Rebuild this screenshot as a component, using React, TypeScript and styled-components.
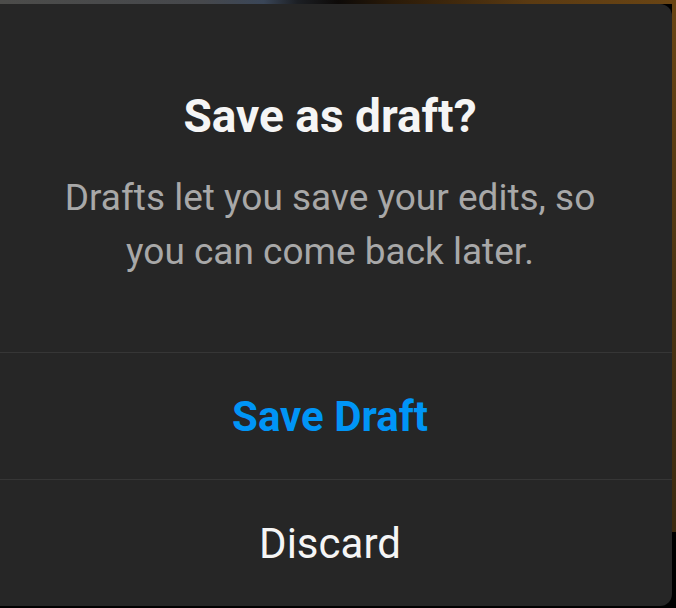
import styled, { createGlobalStyle } from 'styled-components';

const GlobalStyle = createGlobalStyle`
  html, body {
    margin: 0;
    padding: 0;
    background: #000;
  }
  body {
    font-family: Roboto, "Liberation Sans", sans-serif;
    -webkit-font-smoothing: antialiased;
  }
`;

// the blurred photo behind the sheet only peeks out at the top and right edges
const Backdrop = styled.div`
  width: 676px;
  height: 608px;
  overflow: hidden;
  background-color: #000;
  background-image:
    linear-gradient(to right, #4c4c4a 0%, #46484c 30%, #3a4658 39%, #1c1f24 44%, #0d0a08 50%, #2a1a08 58%, #5a3a12 78%, #6a4514 100%),
    linear-gradient(to bottom, #6a4514 0px, #4a3312 300px, #3c2a10 532px, #000 532px);
  background-size: 100% 4px, 4px 100%;
  background-position: top left, top right;
  background-repeat: no-repeat;
  padding-top: 4px;
  box-sizing: border-box;
`;

const Dialog = styled.div`
  margin-left: -12px;
  width: 684px;
  height: 602px;
  background: #262626;
  border-radius: 12px;
  display: flex;
  flex-direction: column;
  overflow: hidden;
`;

const Header = styled.div`
  display: flex;
  flex-direction: column;
  align-items: center;
  padding: 85px 60px 0;
  height: 348px;
  box-sizing: border-box;
  text-align: center;
`;

const Title = styled.h2`
  margin: 0;
  font-size: 46px;
  line-height: 54px;
  font-weight: 700;
  color: #f5f5f5;
`;

const Body = styled.p`
  margin: 28px 0 0;
  font-size: 37px;
  line-height: 54px;
  font-weight: 400;
  color: #a8a8a8;
`;

const ActionButton = styled.button<{ $primary?: boolean }>`
  display: flex;
  align-items: center;
  justify-content: center;
  height: 127px;
  width: 100%;
  border: 0;
  border-top: 1px solid #363636;
  background: transparent;
  font-family: inherit;
  font-size: 42px;
  font-weight: ${({ $primary }) => ($primary ? 700 : 400)};
  color: ${({ $primary }) => ($primary ? '#0095f6' : '#f5f5f5')};
  padding: 0;
  cursor: pointer;
`;

const App = () => {
  return (
    <>
      <GlobalStyle />
      <Backdrop>
        <Dialog>
          <Header>
            <Title>Save as draft?</Title>
            <Body>
              Drafts let you save your edits, so
              <br />
              you can come back later.
            </Body>
          </Header>
          <ActionButton $primary>Save Draft</ActionButton>
          <ActionButton>Discard</ActionButton>
        </Dialog>
      </Backdrop>
    </>
  );
};

export default App;
